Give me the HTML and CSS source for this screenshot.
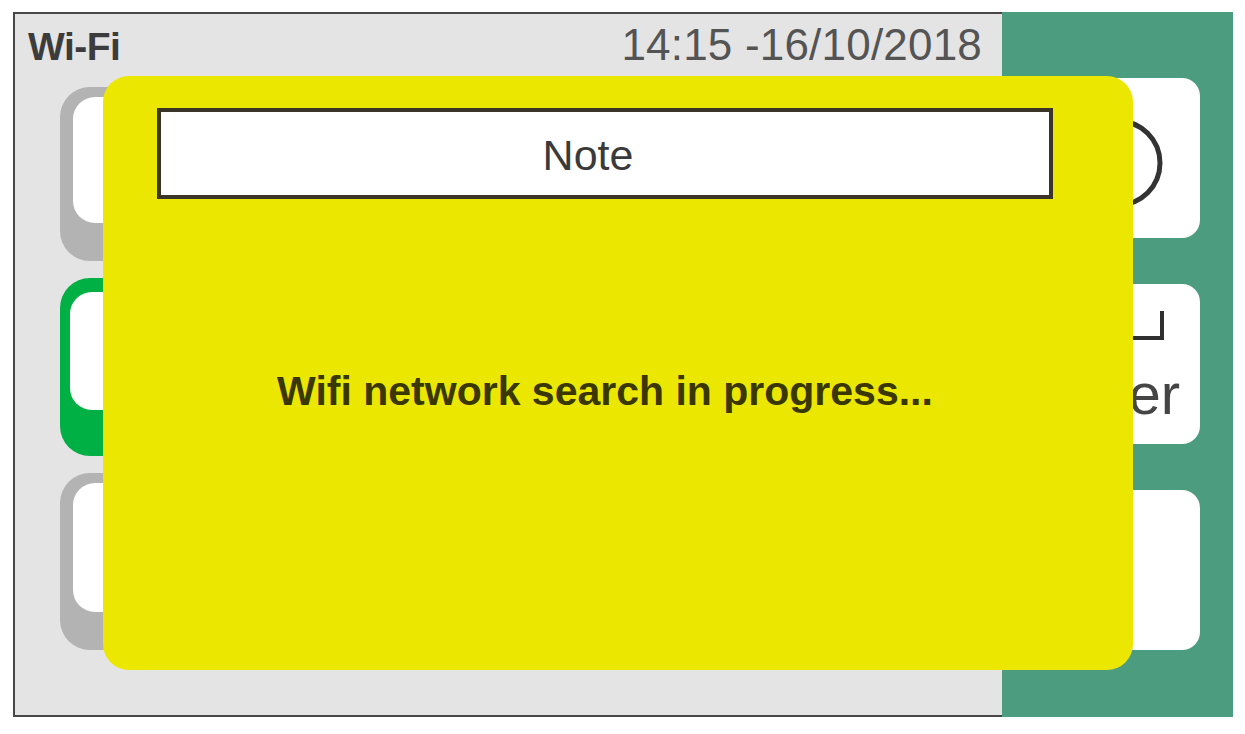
FILE: index.html
```html
<!DOCTYPE html>
<html lang="en">
<head>
  <meta charset="UTF-8">
  <title>Wi-Fi</title>
  <link rel="stylesheet" href="styles.css">
</head>
<body>
  <div class="device">
    <!-- Main screen -->
    <div class="main">
      <div class="status-bar">
        <span class="status-title">Wi-Fi</span>
        <span class="status-clock">14:15 -16/10/2018</span>
      </div>
      <div class="menu">
        <div class="menu-btn"><div class="menu-face"></div></div>
        <div class="menu-btn active"><div class="menu-face"></div></div>
        <div class="menu-btn"><div class="menu-face"></div></div>
      </div>
    </div>

    <!-- Side panel -->
    <div class="side">
      <div class="side-card card-power">
        <svg width="94" height="94" viewBox="0 0 94 94">
          <circle cx="47" cy="47" r="42" fill="none" stroke="#333" stroke-width="5"/>
        </svg>
      </div>
      <div class="side-card card-timer">
        <svg class="timer-icon" width="60" height="32" viewBox="0 0 60 32">
          <polyline points="0,27 56,27 56,0" fill="none" stroke="#2f2f2f" stroke-width="4"/>
        </svg>
        <span class="card-label">Timer</span>
      </div>
      <div class="side-card"></div>
    </div>

    <!-- Note popup -->
    <div class="dialog">
      <div class="dialog-title">Note</div>
      <p class="dialog-msg">Wifi network search in progress...</p>
    </div>
  </div>
</body>
</html>
```

FILE: styles.css
```css
:root {
  --frame: #474747;
  --panel-bg: #e4e4e4;
  --side-green: #4c9c80;
  --note-yellow: #ebe700;
  --btn-gray: #b3b3b3;
  --btn-green: #00b044;
}

body {
  margin: 0;
  background: #fff;
  font-family: "Liberation Sans", Arial, sans-serif;
}

.device {
  position: relative;
  display: flex;
  width: 1220px;
  height: 705px;
  margin: 12px 0 0 13px;
}

/* Main screen */
.main {
  flex: none;
  width: 989px;
  box-sizing: border-box;
  border: 2px solid var(--frame);
  border-right: none;
  background: var(--panel-bg);
  overflow: hidden;
}

.status-bar {
  display: flex;
  justify-content: space-between;
  align-items: baseline;
  height: 50px;
  padding: 6px 20px 0 13px;
  line-height: 50px;
}

.status-title {
  font-size: 39px;
  font-weight: 700;
  letter-spacing: -0.5px;
  color: #3c3c3c;
}

.status-clock {
  font-size: 44px;
  letter-spacing: 0.2px;
  color: #545454;
}

.menu {
  display: flex;
  flex-direction: column;
  gap: 17px;
  padding: 17px 0 0 45px;
}

.menu-btn {
  display: flex;
  width: 420px;
  height: 174px;
  box-sizing: border-box;
  padding: 10px 0 38px 13px;
  border-radius: 30px;
  background: var(--btn-gray);
}

.menu-btn + .menu-btn {
  height: 177px;
}

.menu-btn.active {
  height: 178px;
  padding: 14px 0 46px 10px;
  background: var(--btn-green);
}

.menu-face {
  flex: 1;
  border-radius: 22px;
  background: #fff;
}

/* Side panel */
.side {
  flex: 1;
  min-width: 0;
  display: flex;
  flex-direction: column;
  gap: 46px;
  padding: 66px 33px 0 18px;
  background: var(--side-green);
}

.side-card {
  height: 160px;
  border-radius: 18px;
  background: #fff;
  overflow: hidden;
}

.card-power {
  display: flex;
  justify-content: flex-end;
  align-items: flex-start;
  box-sizing: border-box;
  padding: 38px 35px 0 0;
}

.card-timer {
  display: flex;
  flex-direction: column;
  align-items: flex-end;
  box-sizing: border-box;
  padding-top: 27px;
}

.timer-icon {
  margin-right: 34px;
}

.card-label {
  margin: 21px 20px 0 0;
  font-size: 58px;
  line-height: 60px;
  color: #454545;
  white-space: nowrap;
}

/* Note popup */
.dialog {
  position: absolute;
  left: 90px;
  top: 64px;
  width: 1030px;
  height: 594px;
  box-sizing: border-box;
  padding: 32px 80px 0 54px;
  border-radius: 26px;
  background: var(--note-yellow);
  text-align: center;
}

.dialog-title {
  height: 91px;
  box-sizing: border-box;
  padding-right: 34px;
  border: 4px solid #3a3527;
  background: #fff;
  font-size: 43px;
  line-height: 87px;
  color: #3a3a3a;
}

.dialog-msg {
  margin: 167px 0 0;
  font-size: 41px;
  font-weight: 700;
  line-height: 50px;
  color: #3b3700;
}
```
